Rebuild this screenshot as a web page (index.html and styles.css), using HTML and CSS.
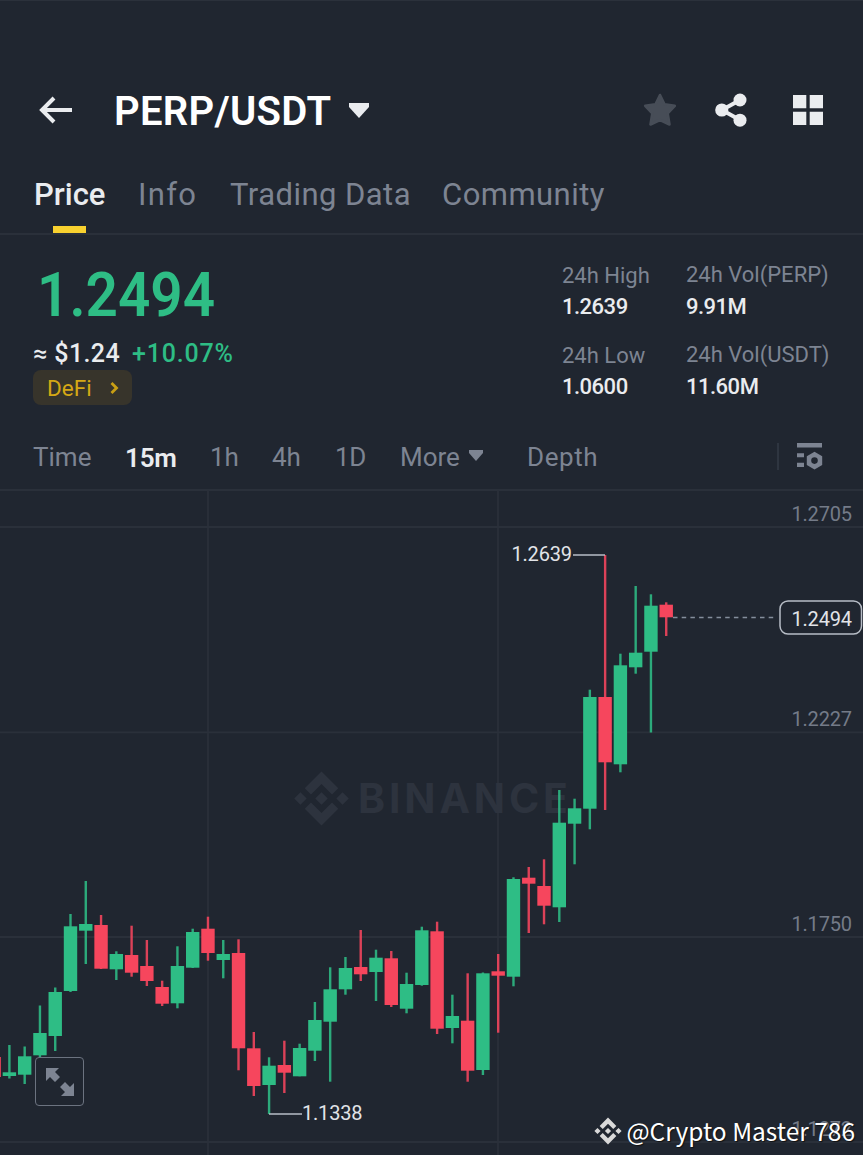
FILE: index.html
```html
<!DOCTYPE html>
<html lang="en">
<head>
  <meta charset="UTF-8" />
  <meta name="viewport" content="width=device-width, initial-scale=1.0"/>
  <title>PERP/USDT</title>
  <link rel="stylesheet" href="styles.css">
</head>
<body>

<header class="topbar">
  <svg class="back" width="34" height="28" viewBox="0 0 34 28"><path d="M15 2 L3 14 L15 26 M3 14 H33" fill="none" stroke="#eaecef" stroke-width="4"/></svg>
  <h1>PERP/USDT</h1>
  <svg class="caret" width="22" height="17" viewBox="0 0 22 17"><path d="M1 1 H21 V5 L11 16 L1 5 Z" fill="#eaecef"/></svg>
  <div class="actions">
    <svg width="34" height="34" viewBox="0 0 34 34"><path d="M17 2 L21.5 11.3 L31.8 12.8 L24.7 20.4 L26.5 31.5 L17 27 L7.5 31.5 L9.3 20.4 L2.2 12.8 L12.5 11.3 Z" fill="#474d57" stroke="#474d57" stroke-width="2.6" stroke-linejoin="round"/></svg>
    <svg width="32" height="34" viewBox="0 0 32 34"><path d="M25 7 L7 17 L25 27" fill="none" stroke="#eaecef" stroke-width="4"/><g fill="#eaecef"><circle cx="25" cy="7" r="6.5"/><circle cx="6.8" cy="17" r="6.6"/><circle cx="25" cy="27.2" r="6.5"/></g></svg>
    <svg width="30" height="30" viewBox="0 0 30 30"><path d="M0 0H13.3V13.3H0Z M16.7 0H30V13.3H16.7Z M0 16.7H13.3V30H0Z M16.7 16.7H30V30H16.7Z" fill="#eaecef"/></svg>
  </div>
</header>

<nav class="tabs">
  <a class="active t-price">Price</a>
  <a class="t-info">Info</a>
  <a class="t-data">Trading Data</a>
  <a class="t-comm">Community</a>
</nav>

<section class="summary">
  <div class="quote">
    <div class="last">1.2494</div>
    <div class="change"><span class="usd">≈ $1.24</span><span class="up">+10.07%</span></div>
    <div class="tag">DeFi <svg width="9" height="12" viewBox="0 0 9 12"><path d="M1.5 1 L6.5 6 L1.5 11" fill="none" stroke="#c99f14" stroke-width="2.8"/></svg></div>
  </div>
  <div class="stats">
    <div class="stat"><label>24h High</label><b>1.2639</b></div>
    <div class="stat"><label>24h Low</label><b>1.0600</b></div>
  </div>
  <div class="stats vol">
    <div class="stat"><label>24h Vol(PERP)</label><b>9.91M</b></div>
    <div class="stat"><label>24h Vol(USDT)</label><b>11.60M</b></div>
  </div>
</section>

<div class="intervals">
  <span class="i-time">Time</span>
  <span class="i-15m active">15m</span>
  <span class="i-1h">1h</span>
  <span class="i-4h">4h</span>
  <span class="i-1d">1D</span>
  <span class="i-more">More <svg width="14" height="11" viewBox="0 0 14 11"><path d="M0 0H14V3L7 11L0 3Z" fill="#7d8492"/></svg></span>
  <span class="i-depth">Depth</span>
  <div class="settings">
    <svg width="26" height="27" viewBox="0 0 26 27"><path d="M0 0H25V4.4H0Z M0 10.3H7V14.3H0Z M0 19.7H7V24H0Z" fill="#7d8492"/><path fill-rule="evenodd" d="M17.5 8.8L25.2 13.2V22L17.5 26.4L9.8 22V13.2Z M17.5 14.3A3.3 3.3 0 1 0 17.5 20.9A3.3 3.3 0 1 0 17.5 14.3Z" fill="#7d8492"/></svg>
  </div>
</div>

<main class="chart">
  <svg id="candles" width="863" height="665" viewBox="0 490 863 665">
    <path class="grid" d="M0 527H863 M0 732.3H863 M0 937H863 M0 1142H863 M208 490V1155 M498 490V1155"/>
    <g class="brand">
      <g transform="translate(321.5 798.5) scale(27)"><use href="#logo"/></g>
      <text x="358" y="813" textLength="210">BINANCE</text>
    </g>
    <g class="axis">
      <text x="791.5" y="520.5" textLength="60.5">1.2705</text>
      <text x="791.5" y="726" textLength="60.5">1.2227</text>
      <text x="791.5" y="930.5" textLength="60.5">1.1750</text>
      <text x="791.5" y="1136" textLength="60.5">1.1272</text>
    </g>
    <g id="series"></g>
    <path class="leader" d="M573 555H605 M269 1114H302"/>
    <path class="last-line" d="M673 617.5H776"/>
    <rect class="last-box" x="780" y="601" width="81.5" height="33" rx="8"/>
    <g class="mark">
      <text x="511.5" y="560.5" textLength="60.5">1.2639</text>
      <text x="302" y="1120" textLength="60.5">1.1338</text>
      <text x="791.5" y="625.5" textLength="60.5">1.2494</text>
    </g>
    <defs>
      <g id="logo">
        <path d="M0 -1L.62 -.38L.39 -.15L0 -.54L-.39 -.15L-.62 -.38Z M0 1L.62 .38L.39 .15L0 .54L-.39 .15L-.62 .38Z M0 -.23L.23 0L0 .23L-.23 0Z M-.78 -.23L-.55 0L-.78 .23L-1.01 0Z M.78 -.23L1.01 0L.78 .23L.55 0Z"/>
      </g>
    </defs>
  </svg>
  <button class="expand"><svg width="28" height="28" viewBox="0 0 28 28"><path d="M0 0H13L9 4L14 9L9 14L4 9L0 13Z M28 28H15L19 24L14 19L19 14L24 19L28 15Z" fill="#7d8492"/></svg></button>
  <div class="credit">
    <svg width="28" height="28" viewBox="-1.04 -1.04 2.08 2.08"><use href="#logo"/></svg>
    <span>@Crypto Master 786</span>
  </div>
</main>

<script>
  // color, high, body top, body bottom, low
  const candles = [
    ["r", 1057, 1057, 1077, 1077],
    ["g", 1045, 1072.3, 1076, 1078.5],
    ["g", 1046.5, 1056.3, 1074.7, 1084],
    ["g", 1005.5, 1033, 1055.3, 1060],
    ["g", 987.5, 992, 1036, 1051],
    ["g", 914, 926.3, 991, 992],
    ["g", 881, 924, 930.7, 964],
    ["r", 915, 925, 968.7, 969],
    ["g", 951.3, 954, 969.3, 980],
    ["r", 925.7, 955, 972.7, 976.7],
    ["r", 940, 966, 981, 986],
    ["r", 980.7, 987, 1003.7, 1006],
    ["g", 946.3, 966, 1003.3, 1008.3],
    ["g", 928.7, 932, 967.7, 968],
    ["r", 916.7, 928.7, 953, 960.7],
    ["g", 940, 954, 960, 978.3],
    ["r", 939.3, 953, 1048.3, 1070.3],
    ["r", 1032, 1048.3, 1086, 1096],
    ["g", 1057.3, 1065.7, 1085, 1114],
    ["r", 1040.7, 1065, 1072.7, 1093],
    ["g", 1043.7, 1048, 1076.3, 1076.3],
    ["g", 1002, 1020, 1050.7, 1061],
    ["g", 967.3, 989.3, 1021.7, 1081.7],
    ["g", 957, 968, 989.3, 994.7],
    ["r", 930, 967, 974.3, 981],
    ["g", 949.7, 957.7, 972, 1001],
    ["r", 951, 958.3, 1005, 1007],
    ["g", 972.7, 984, 1008.7, 1013.3],
    ["g", 926.7, 930.3, 985, 985.7],
    ["r", 921.7, 931.3, 1028.7, 1034],
    ["g", 994.7, 1016, 1028, 1043.3],
    ["r", 973.3, 1020.7, 1070.7, 1081.7],
    ["g", 972.5, 973.3, 1070, 1075],
    ["r", 954, 971.3, 975.7, 1032.7],
    ["g", 877.3, 879, 976.7, 986.3],
    ["r", 867, 877.7, 883.7, 933],
    ["r", 859.3, 886, 905.7, 924.3],
    ["g", 790, 822.7, 907.3, 922],
    ["g", 798.7, 808.3, 823.7, 864.3],
    ["g", 689.7, 697, 808.7, 829.3],
    ["r", 555, 697, 762.3, 810],
    ["g", 653.7, 665.3, 764.3, 772.3],
    ["g", 586, 652.7, 667.3, 673.7],
    ["g", 594.3, 605.7, 651.7, 732.5],
    ["r", 602.3, 604.7, 617.3, 636]
  ];
  const step = 15.275;
  let out = "";
  candles.forEach(([c, high, top, bottom, low], i) => {
    const x = 9.4 + (i - 1) * step;
    out += `<g class="${c}"><rect class="wick" x="${x - 1.2}" y="${high}" width="2.4" height="${low - high}"/>`;
    out += `<rect x="${x - 6.7}" y="${top}" width="13.4" height="${bottom - top}"/></g>`;
  });
  document.getElementById("series").innerHTML = out;
</script>
</body>
</html>
```
FILE: styles.css
```css
* { margin: 0; padding: 0; box-sizing: border-box; }
body { width: 863px; height: 1155px; overflow: hidden; background: #202630; color: #eaecef; font-family: Roboto, sans-serif; border-top: 1px solid #2b313b; }
svg { display: block; }

.topbar { display: flex; align-items: center; height: 150px; padding: 68px 40px 0 39px; }
.topbar h1 { margin: 4px 0 0 41px; width: 218px; font-size: 40px; font-weight: 600; line-height: 48px; letter-spacing: .3px; white-space: nowrap; color: #fff; }
.caret { margin-left: 16px; }
.actions { margin-left: auto; display: flex; align-items: center; }
.actions svg:nth-child(2) { margin: 0 46px 0 38px; }

.tabs { display: flex; height: 84px; padding: 23px 34px 0; border-bottom: 2px solid #2a303a; font-size: 31px; line-height: 42px; letter-spacing: .45px; color: #7d8492; white-space: nowrap; }
.tabs a { position: relative; }
.tabs .active { color: #eaecef; font-weight: 500; letter-spacing: 0; }
.tabs .active::after { content: ""; position: absolute; left: 19px; bottom: 0; width: 33px; height: 7px; background: #f8d12f; }
.t-price { width: 104px; }
.t-info { width: 92px; letter-spacing: 1.3px; }
.t-data { width: 212px; }

.summary { display: flex; height: 191px; padding-left: 33px; }
.quote { width: 529px; padding-top: 24px; }
.last { height: 72px; font-size: 61px; line-height: 72px; font-weight: 600; color: #2ebd85; padding-left: 4px; transform: scaleX(.93); transform-origin: 4px 0; }
.change { display: flex; height: 39px; padding-top: 7px; font-size: 25px; line-height: 32px; font-weight: 500; letter-spacing: .4px; }
.usd { width: 99px; }
.up { color: #2ebd85; letter-spacing: .8px; }
.tag { display: flex; align-items: center; justify-content: space-between; width: 99px; height: 35px; padding: 0 13px 0 14px; border-radius: 8px; background: #37342b; color: #d5a815; font-size: 22.5px; }
.stats { width: 124px; padding-top: 25px; font-size: 22px; white-space: nowrap; }
.vol { width: 170px; padding-top: 24px; }
.stat { height: 80px; }
.stat label { display: block; line-height: 32px; color: #7d8492; }
.stat b { display: block; line-height: 30px; font-weight: 500; letter-spacing: -.5px; }
.vol b { line-height: 32px; }

.intervals { display: flex; align-items: center; height: 65px; padding: 0 40px 2px 33px; border-bottom: 2px solid #2a303a; color: #7d8492; font-size: 26px; white-space: nowrap; }
.intervals .active { color: #eaecef; font-weight: 600; letter-spacing: -.2px; padding-top: 2px; }
.i-time { width: 92px; }
.i-15m { width: 85px; }
.i-1h { width: 62px; }
.i-4h { width: 63px; }
.i-1d { width: 65px; letter-spacing: -.3px; }
.i-more { width: 127px; display: flex; align-items: center; gap: 9px; }
.i-more svg { margin-bottom: 3px; }
.i-depth { letter-spacing: .6px; }
.settings { margin-left: auto; padding-left: 18px; border-left: 2px solid #2e3540; }

.chart { position: relative; height: 664px; }
#candles { margin-top: -1px; }
.grid { fill: none; stroke: #2a303a; stroke-width: 1.8; }
.axis text, .mark text { font-size: 20px; }
.axis { fill: #747b88; }
.mark { fill: #e2e4e8; }
.brand { fill: #2d333e; }
.brand text { font: 700 41px Inter, sans-serif; }
.r { fill: #f6465d; }
.g { fill: #2ebd85; }
.wick { opacity: .88; }
.leader { stroke: #b7bdc6; stroke-width: 1.5; }
.last-line { stroke: #848e9c; stroke-width: 1.7; stroke-dasharray: 4.5 4.2; }
.last-box { fill: #202630; stroke: #b7bdc6; stroke-width: 1.5; }
.expand { position: absolute; left: 35px; top: 567px; width: 49px; height: 49px; display: flex; align-items: center; justify-content: center; border: 1.5px solid #6c7380; border-radius: 4px; background: #202630; }
.credit { position: absolute; right: 8px; bottom: 5px; display: flex; align-items: center; gap: 4px; fill: #d9d9d9; color: #fff; font: 400 24.5px/36px "Noto Sans CJK SC", sans-serif; white-space: nowrap; text-shadow: 1px 1px 1px #111; }
```
